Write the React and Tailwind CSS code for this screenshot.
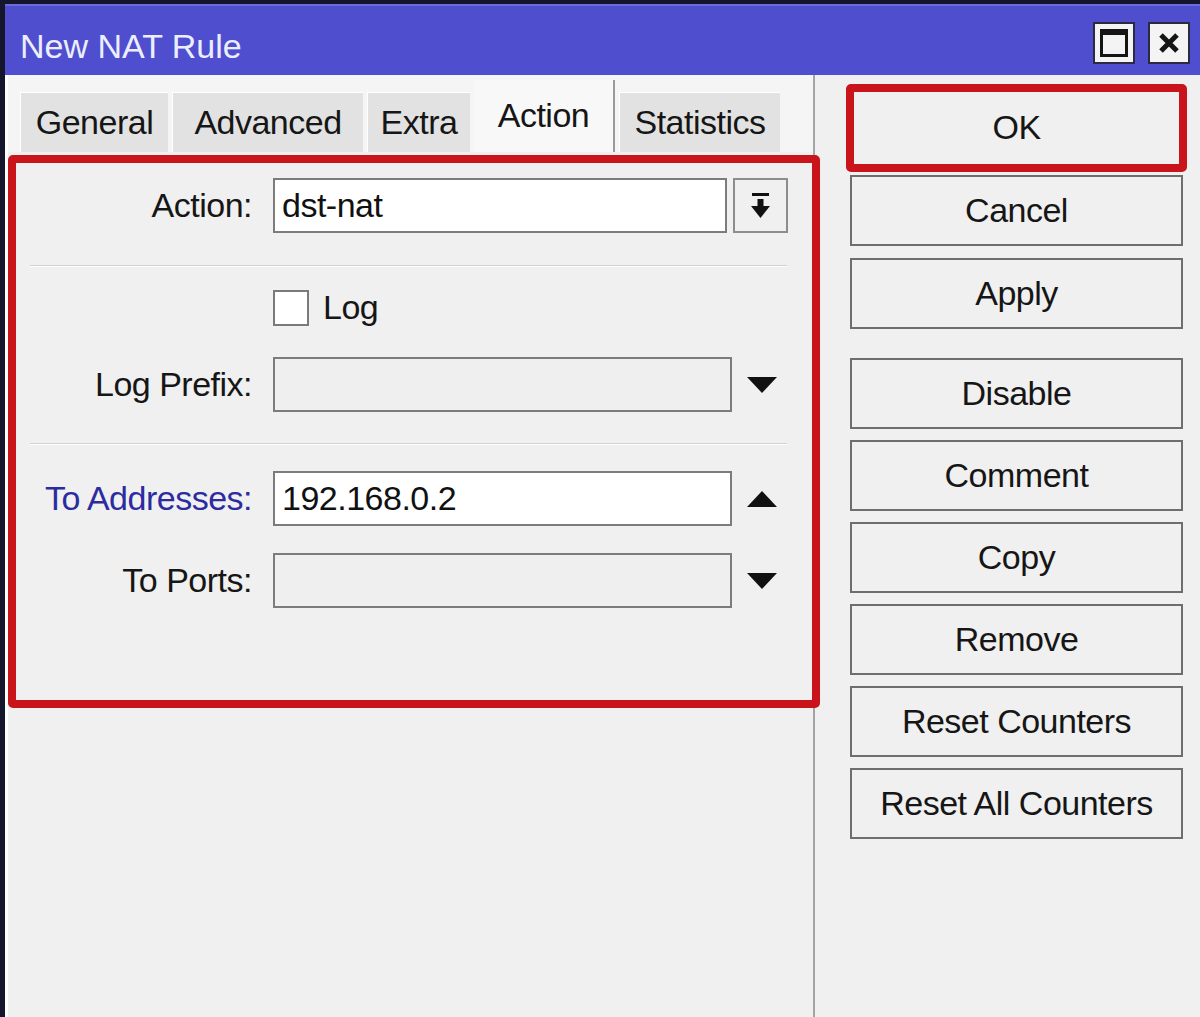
import React from 'react';

const tabs = [
  { name: 'General', w: 'w-[148px]' },
  { name: 'Advanced', w: 'w-[191px]' },
  { name: 'Extra', w: 'w-[103px]' },
  { name: 'Action', w: 'w-[141px]', active: true },
  { name: 'Statistics', w: 'w-[161px]' },
];

const sideButtons = ['Disable', 'Comment', 'Copy', 'Remove', 'Reset Counters', 'Reset All Counters'];

const TriangleDown = () => (
  <svg width="30" height="16" viewBox="0 0 30 16">
    <polygon points="0,0 30,0 15,16" fill="#111" />
  </svg>
);

const TriangleUp = () => (
  <svg width="30" height="16" viewBox="0 0 30 16">
    <polygon points="0,16 30,16 15,0" fill="#111" />
  </svg>
);

const Separator = () => (
  <div className="ml-[14px] w-[757px] h-[2px] border-t border-[#d2d2d2] border-b border-b-white" />
);

const Field = ({ label, blue, children }) => (
  <div className="flex items-center">
    <div className={`w-[236px] text-right ${blue ? 'text-[#2c2ca0]' : 'text-[#161616]'}`}>{label}</div>
    <div className="ml-[21px] flex items-center">{children}</div>
  </div>
);

const Box = ({ value, white }) => (
  <div
    className={`w-[459px] h-[55px] border-2 border-[#7c7c7c] flex items-center pl-[7px] text-[#111] ${
      white ? 'bg-white' : 'bg-[#efefef]'
    }`}
  >
    {value}
  </div>
);

const SideButton = ({ label, className = '' }) => (
  <div
    className={`ml-[35px] w-[333px] h-[71px] border-2 border-[#6e6e6e] bg-[#f0f0f0] flex items-center justify-center text-[#161616] ${className}`}
  >
    {label}
  </div>
);

export default function App() {
  return (
    <div
      className="w-[1200px] h-[1017px] overflow-hidden bg-[#f0f0f0] border-l-[5px] border-t-[4px] border-[#15152c] flex flex-col text-[34px] leading-[1.15] tracking-[-0.5px]"
      style={{ fontFamily: '"Liberation Sans", Arial, sans-serif' }}
    >
      {/* title bar */}
      <div className="h-[71px] shrink-0 bg-[#4e4ecf] flex items-center justify-between pl-[15px] pr-[10px] border-t-2 border-[#6a6ad8]">
        <span className="pt-[12px] text-[#eceeff] tracking-normal">New NAT Rule</span>
        <div className="flex gap-[13px] pt-[4px]">
          <div className="w-[42px] h-[42px] bg-[#f4f4f4] border-2 border-[#2a2a40] flex items-center justify-center">
            <svg width="28" height="28" viewBox="0 0 28 28">
              <rect x="1.5" y="1.5" width="25" height="25" fill="none" stroke="#151515" strokeWidth="3" />
              <rect x="0" y="0" width="28" height="6" fill="#151515" />
            </svg>
          </div>
          <div className="w-[42px] h-[42px] bg-[#f4f4f4] border-2 border-[#2a2a40] flex items-center justify-center">
            <svg width="20" height="20" viewBox="0 0 20 20">
              <path d="M2 2 L18 18 M18 2 L2 18" stroke="#151515" strokeWidth="5" />
            </svg>
          </div>
        </div>
      </div>

      <div className="flex flex-1">
        {/* left panel */}
        <div className="w-[810px] shrink-0 border-l-[3px] border-l-white border-r-2 border-r-[#a4a4a4] flex flex-col">
          <div className="h-[77px] flex items-end gap-[4px] pl-[12px] bg-[#f5f5f5]">
            {tabs.map((t) => (
              <div
                key={t.name}
                className={`${t.w} flex items-center justify-center text-[#161616] ${
                  t.active
                    ? 'h-[72px] bg-[#f8f8f8] border-r-2 border-[#9a9a9a]'
                    : 'h-[60px] bg-[#e2e2e2] border-t border-l border-white'
                }`}
              >
                {t.name}
              </div>
            ))}
          </div>

          <div className="relative z-10 mt-[3px] w-[812px] h-[553px] border-[8px] border-[#c8141a] rounded-[5px] bg-[#f0f0f0]">
            <div className="mt-[15px]">
              <Field label="Action:">
                <div className="w-[454px] h-[55px] bg-white border-2 border-[#7c7c7c] flex items-center pl-[7px] text-[#111]">
                  dst-nat
                </div>
                <div className="ml-[6px] w-[55px] h-[55px] bg-[#f0f0f0] border-2 border-[#8d8d8d] flex items-center justify-center">
                  <svg width="20" height="26" viewBox="0 0 20 26">
                    <rect x="1" y="0" width="17" height="3" fill="#111" />
                    <rect x="6.5" y="6" width="6" height="8" fill="#111" />
                    <polygon points="0,13 19,13 9.5,25" fill="#111" />
                  </svg>
                </div>
              </Field>
            </div>

            <div className="mt-[32px]">
              <Separator />
            </div>

            <div className="mt-[23px] h-[36px] flex items-center pl-[257px]">
              <div className="w-[36px] h-[36px] bg-white border-2 border-[#7a7a7a]" />
              <span className="ml-[14px] text-[#161616]">Log</span>
            </div>

            <div className="mt-[31px]">
              <Field label="Log Prefix:">
                <Box value="" />
                <div className="ml-[15px]">
                  <TriangleDown />
                </div>
              </Field>
            </div>

            <div className="mt-[31px]">
              <Separator />
            </div>

            <div className="mt-[26px]">
              <Field label="To Addresses:" blue>
                <Box value="192.168.0.2" white />
                <div className="ml-[15px]">
                  <TriangleUp />
                </div>
              </Field>
            </div>

            <div className="mt-[27px]">
              <Field label="To Ports:">
                <Box value="" />
                <div className="ml-[15px]">
                  <TriangleDown />
                </div>
              </Field>
            </div>
          </div>
        </div>

        {/* right buttons */}
        <div className="flex-1 flex flex-col">
          <div className="mt-[9px] ml-[31px] w-[341px] h-[88px] border-[8px] border-[#c8141a] rounded-[5px] bg-[#f0f0f0] flex items-center justify-center text-[#161616]">
            OK
          </div>
          <SideButton label="Cancel" className="mt-[3px]" />
          <SideButton label="Apply" className="mt-[12px]" />
          <div className="mt-[29px] flex flex-col gap-[11px]">
            {sideButtons.map((b) => (
              <SideButton key={b} label={b} />
            ))}
          </div>
        </div>
      </div>
    </div>
  );
}
